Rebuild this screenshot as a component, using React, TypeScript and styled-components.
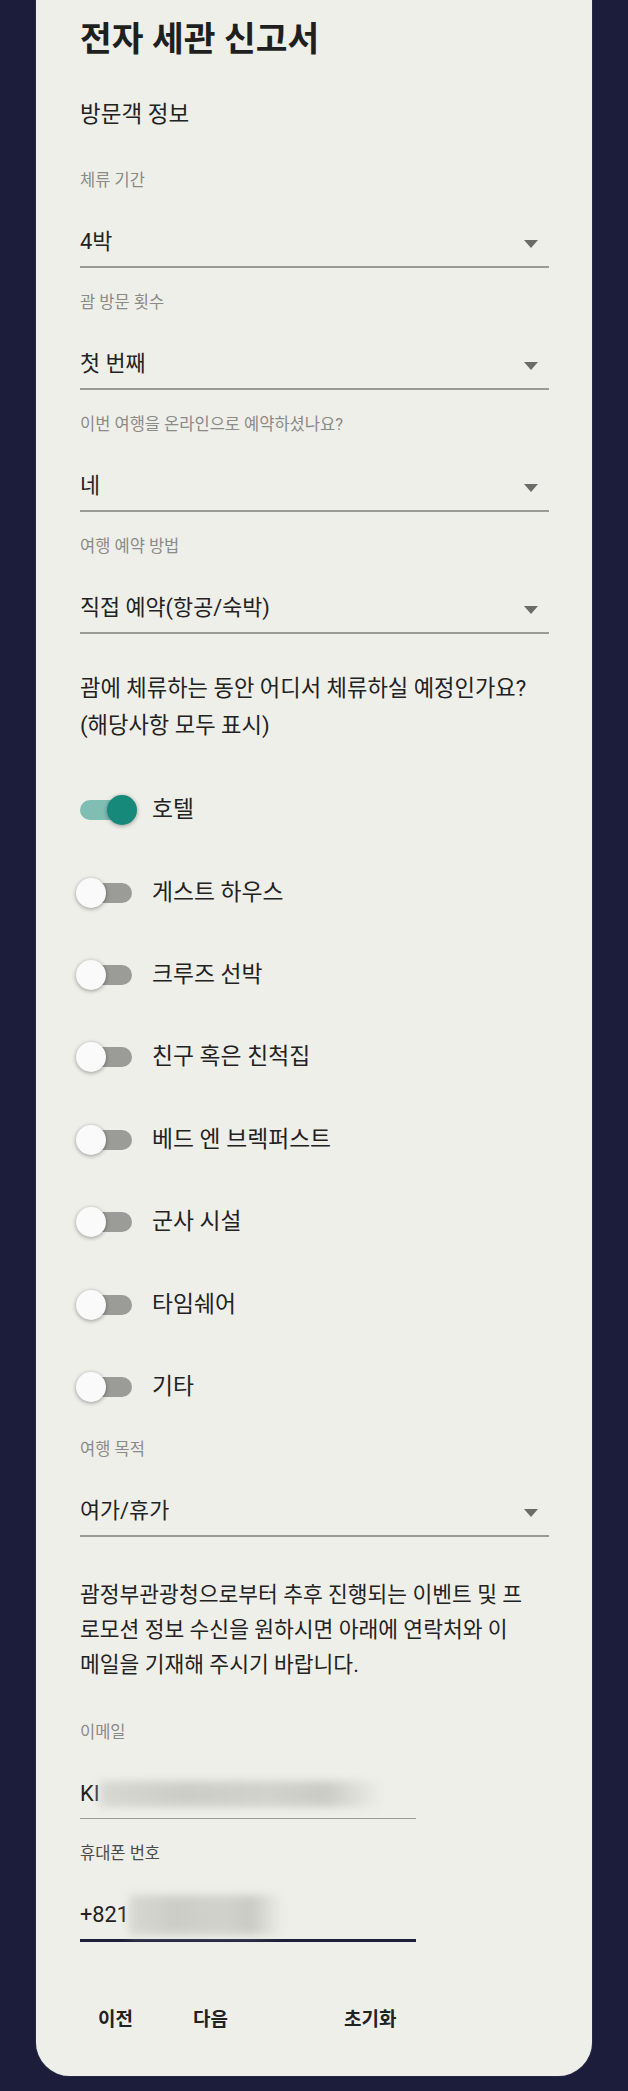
import React from "react"
import styled, { createGlobalStyle } from "styled-components"

const GlobalStyle = createGlobalStyle`
  html, body {
    margin: 0;
    padding: 0;
    background: #1b1d3a;
  }
  body {
    font-family: "Roboto", "Noto Sans CJK KR", sans-serif;
    color: #222222;
  }
`

const Page = styled.div`
  padding: 0 36px 16px;
`

const Card = styled.div`
  background: #efefea;
  border-radius: 0 0 34px 34px;
  padding: 14px 43px 35px 44px;
  box-shadow: 0 0 1px rgba(255, 255, 255, 0.55);
`

const Title = styled.h1`
  margin: 0;
  font-size: 34.5px;
  line-height: 50px;
  font-weight: 700;
  color: #1f1f1f;
`

const Section = styled.h2`
  margin: 35px 0 0;
  font-size: 22.5px;
  line-height: 30px;
  font-weight: 400;
  color: #222;
`

const Field = styled.div<{ $mt: number; $width?: number }>`
  margin-top: ${(p) => p.$mt}px;
  width: ${(p) => (p.$width ? `${p.$width}px` : "100%")};
`

const Label = styled.div<{ $dark?: boolean }>`
  font-size: 16.5px;
  line-height: 22px;
  color: ${(p) => (p.$dark ? "#4a4a48" : "#8a8a87")};
`

const ValueRow = styled.div<{ $line?: "thin" | "focus" }>`
  margin-top: 26px;
  height: 48px;
  display: flex;
  align-items: center;
  justify-content: space-between;
  padding-right: 11px;
  border-bottom: ${(p) =>
    p.$line === "focus" ? "3px solid #1c1f3a" : p.$line === "thin" ? "1.5px solid #9a9a97" : "2px solid #9a9a97"};
`

const Value = styled.span`
  font-size: 21.8px;
  line-height: 30px;
  color: #222;
  display: flex;
  align-items: center;
`

const Caret = styled.svg`
  width: 14px;
  height: 8px;
  margin-top: 3px;
  flex: none;
`

const Blur = styled.span<{ $w: number; $h: number }>`
  display: inline-block;
  width: ${(p) => p.$w}px;
  height: ${(p) => p.$h}px;
  filter: blur(4px);
  background: linear-gradient(90deg, #d8d8d3 0%, #cdcdc8 30%, #d2d2cd 60%, #cbcbc6 80%, rgba(220, 220, 215, 0) 100%);
`

const Text = styled.p<{ $mt: number; $lh: number; $size: number }>`
  margin: ${(p) => p.$mt}px 0 0;
  font-size: ${(p) => p.$size}px;
  line-height: ${(p) => p.$lh}px;
  color: #222;
  white-space: nowrap;
`

const ToggleList = styled.div`
  margin-top: 25px;
`

const ToggleRow = styled.div`
  height: 82.4px;
  display: flex;
  align-items: center;
`

const Track = styled.span<{ $on: boolean }>`
  position: relative;
  flex: none;
  width: 52px;
  height: 20px;
  border-radius: 10px;
  background: ${(p) => (p.$on ? "#80beb4" : "#9b9b98")};
`

const Thumb = styled.span<{ $on: boolean }>`
  position: absolute;
  top: -5px;
  left: ${(p) => (p.$on ? "27px" : "-4px")};
  width: 30px;
  height: 30px;
  border-radius: 50%;
  background: ${(p) => (p.$on ? "#17897b" : "#fafafa")};
  box-shadow: 0 1px 4px rgba(0, 0, 0, 0.38);
`

const ToggleLabel = styled.span`
  margin-left: 20px;
  font-size: 22.8px;
  line-height: 30px;
  color: #222;
`

const Actions = styled.div`
  margin-top: 51px;
  display: flex;
  height: 48px;
`

const TextButton = styled.button<{ $ml: number }>`
  margin-left: ${(p) => p.$ml}px;
  padding: 0 18px;
  height: 48px;
  border: none;
  background: transparent;
  font-family: inherit;
  font-size: 19px;
  font-weight: 600;
  color: #222;
  cursor: pointer;
`

const Arrow = () => (
  <Caret viewBox="0 0 14 8">
    <polygon points="0,0 14,0 7,8" fill="#6b6b68" />
  </Caret>
)

const selects = [
  { label: "체류 기간", value: "4박" },
  { label: "괌 방문 횟수", value: "첫 번째" },
  { label: "이번 여행을 온라인으로 예약하셨나요?", value: "네" },
  { label: "여행 예약 방법", value: "직접 예약(항공/숙박)" },
]

const stays = [
  { name: "호텔", on: true },
  { name: "게스트 하우스", on: false },
  { name: "크루즈 선박", on: false },
  { name: "친구 혹은 친척집", on: false },
  { name: "베드 엔 브렉퍼스트", on: false },
  { name: "군사 시설", on: false },
  { name: "타임쉐어", on: false },
  { name: "기타", on: false },
]

const App = () => {
  return (
    <>
      <GlobalStyle />
      <Page>
        <Card>
          <Title>전자 세관 신고서</Title>
          <Section>방문객 정보</Section>

          {selects.map((s, i) => (
            <Field key={s.label} $mt={i === 0 ? 41 : 24}>
              <Label>{s.label}</Label>
              <ValueRow>
                <Value>{s.value}</Value>
                <Arrow />
              </ValueRow>
            </Field>
          ))}

          <Text $mt={36} $lh={37} $size={22.2}>
            괌에 체류하는 동안 어디서 체류하실 예정인가요?
            <br />
            (해당사항 모두 표시)
          </Text>

          <ToggleList>
            {stays.map((s) => (
              <ToggleRow key={s.name}>
                <Track $on={s.on}>
                  <Thumb $on={s.on} />
                </Track>
                <ToggleLabel>{s.name}</ToggleLabel>
              </ToggleRow>
            ))}
          </ToggleList>

          <Field $mt={11}>
            <Label>여행 목적</Label>
            <ValueRow>
              <Value>여가/휴가</Value>
              <Arrow />
            </ValueRow>
          </Field>

          <Text $mt={40} $lh={35} $size={21.5}>
            괌정부관광청으로부터 추후 진행되는 이벤트 및 프
            <br />
            로모션 정보 수신을 원하시면 아래에 연락처와 이
            <br />
            메일을 기재해 주시기 바랍니다.
          </Text>

          <Field $mt={40} $width={336}>
            <Label>이메일</Label>
            <ValueRow $line="thin">
              <Value>
                KI
                <Blur $w={283} $h={26} />
              </Value>
            </ValueRow>
          </Field>

          <Field $mt={24} $width={336}>
            <Label $dark>휴대폰 번호</Label>
            <ValueRow $line="focus">
              <Value>
                +821
                <Blur $w={154} $h={40} />
              </Value>
            </ValueRow>
          </Field>

          <Actions>
            <TextButton $ml={0}>이전</TextButton>
            <TextButton $ml={24}>다음</TextButton>
            <TextButton $ml={80}>초기화</TextButton>
          </Actions>
        </Card>
      </Page>
    </>
  )
}

export default App
